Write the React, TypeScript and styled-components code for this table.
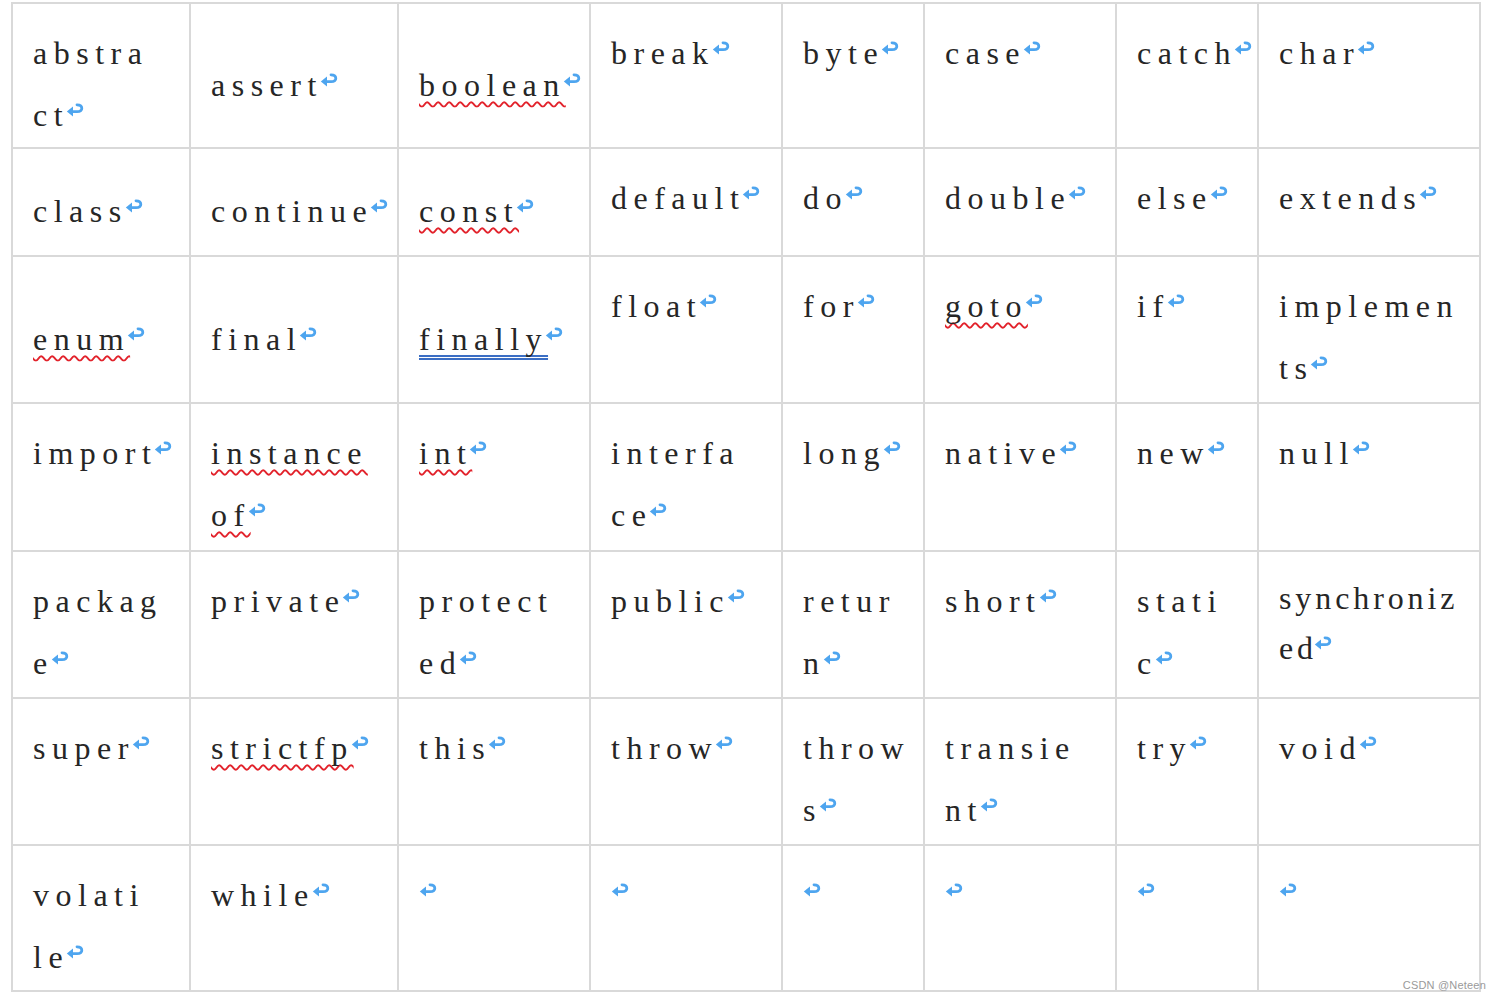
import React from "react";
import styled, { createGlobalStyle } from "styled-components";

const GlobalStyle = createGlobalStyle`
  html, body {
    margin: 0;
    padding: 0;
    background: #ffffff;
  }
`;

const Page = styled.div`
  position: relative;
  width: 1501px;
  height: 999px;
  padding: 2px 0 0 11px;
  box-sizing: border-box;
  overflow: hidden;
`;

const Table = styled.table`
  border-collapse: collapse;
  table-layout: fixed;
  width: 1470px;
  font-family: "Liberation Serif", "Times New Roman", serif;
  font-size: 32px;
  color: #262626;
`;

const Row = styled.tr<{ $h: number }>`
  height: ${({ $h }) => $h}px;
`;

const Cell = styled.td<{ $mid?: boolean; $tight?: boolean }>`
  border: 2px solid #d9d9d9;
  padding: ${({ $tight }) => ($tight ? "21px" : "18px")} 2px 0 20px;
  vertical-align: ${({ $mid }) => ($mid ? "middle" : "top")};
  line-height: ${({ $tight }) => ($tight ? "50px" : "62px")};
  letter-spacing: ${({ $tight }) => ($tight ? "3.9px" : "6.5px")};
  white-space: nowrap;
`;

const Word = styled.span<{ $line?: "wavy" | "double" }>`
  text-decoration: ${({ $line }) =>
    $line === "wavy"
      ? "underline wavy #e2222b"
      : $line === "double"
      ? "underline double #3b6ec4"
      : "none"};
  text-decoration-thickness: ${({ $line }) => ($line === "double" ? "2px" : "1.5px")};
  text-underline-offset: 5px;
  text-decoration-skip-ink: none;
`;

const MarkSvg = styled.svg<{ $solo?: boolean }>`
  width: 18px;
  height: 14px;
  vertical-align: 9px;
  margin-left: ${({ $solo }) => ($solo ? "0" : "-3px")};
`;

const Watermark = styled.div`
  position: absolute;
  right: 15px;
  bottom: 8px;
  font-family: "Liberation Sans", Arial, sans-serif;
  font-size: 11px;
  color: #9a9a9a;
  letter-spacing: 0.2px;
`;

// the blue paragraph mark Word draws at the end of each cell
const ReturnMark = ({ solo }: { solo?: boolean }) => (
  <MarkSvg $solo={solo} viewBox="0 0 18 14">
    <path
      d="M11 1.8 Q15.8 1.8 15.8 5.2 Q15.8 8.6 11 8.6 H5.5"
      fill="none"
      stroke="#4ea5ef"
      strokeWidth="2.8"
      strokeLinecap="round"
    />
    <path d="M0.8 8.6 L7 3.6 L7 13.6 Z" fill="#4ea5ef" />
  </MarkSvg>
);

type CellData = {
  lines: string[];
  line?: "wavy" | "double";
  mid?: boolean;
  tight?: boolean;
};

const c = (text: string, opts: Omit<CellData, "lines"> = {}): CellData => ({
  lines: text ? text.split("/") : [],
  ...opts,
});

const rows: { h: number; cells: CellData[] }[] = [
  {
    h: 145,
    cells: [
      c("abstra/ct"),
      c("assert", { mid: true }),
      c("boolean", { mid: true, line: "wavy" }),
      c("break"),
      c("byte"),
      c("case"),
      c("catch"),
      c("char"),
    ],
  },
  {
    h: 108,
    cells: [
      c("class", { mid: true }),
      c("continue", { mid: true }),
      c("const", { mid: true, line: "wavy" }),
      c("default"),
      c("do"),
      c("double"),
      c("else"),
      c("extends"),
    ],
  },
  {
    h: 147,
    cells: [
      c("enum", { mid: true, line: "wavy" }),
      c("final", { mid: true }),
      c("finally", { mid: true, line: "double" }),
      c("float"),
      c("for"),
      c("goto", { line: "wavy" }),
      c("if"),
      c("implemen/ts"),
    ],
  },
  {
    h: 148,
    cells: [
      c("import"),
      c("instance/of", { line: "wavy" }),
      c("int", { line: "wavy" }),
      c("interfa/ce"),
      c("long"),
      c("native"),
      c("new"),
      c("null"),
    ],
  },
  {
    h: 147,
    cells: [
      c("packag/e"),
      c("private"),
      c("protect/ed"),
      c("public"),
      c("retur/n"),
      c("short"),
      c("stati/c"),
      c("synchroniz/ed", { tight: true }),
    ],
  },
  {
    h: 147,
    cells: [
      c("super"),
      c("strictfp", { line: "wavy" }),
      c("this"),
      c("throw"),
      c("throw/s"),
      c("transie/nt"),
      c("try"),
      c("void"),
    ],
  },
  {
    h: 146,
    cells: [c("volati/le"), c("while"), c(""), c(""), c(""), c(""), c(""), c("")],
  },
];

const colWidths = [178, 208, 192, 192, 142, 192, 142, 222];

const App = () => {
  return (
    <Page>
      <GlobalStyle />
      <Table>
        <colgroup>
          {colWidths.map((w, i) => (
            <col key={i} style={{ width: w }} />
          ))}
        </colgroup>
        <tbody>
          {rows.map((row, r) => (
            <Row key={r} $h={row.h}>
              {row.cells.map((cell, i) => (
                <Cell key={i} $mid={cell.mid} $tight={cell.tight}>
                  {cell.lines.length > 0 && (
                    <Word $line={cell.line}>
                      {cell.lines.map((ln, k) => (
                        <React.Fragment key={k}>
                          {k > 0 && <br />}
                          {ln}
                        </React.Fragment>
                      ))}
                    </Word>
                  )}
                  <ReturnMark solo={cell.lines.length === 0} />
                </Cell>
              ))}
            </Row>
          ))}
        </tbody>
      </Table>
      <Watermark>CSDN @Neteen</Watermark>
    </Page>
  );
};

export default App;
